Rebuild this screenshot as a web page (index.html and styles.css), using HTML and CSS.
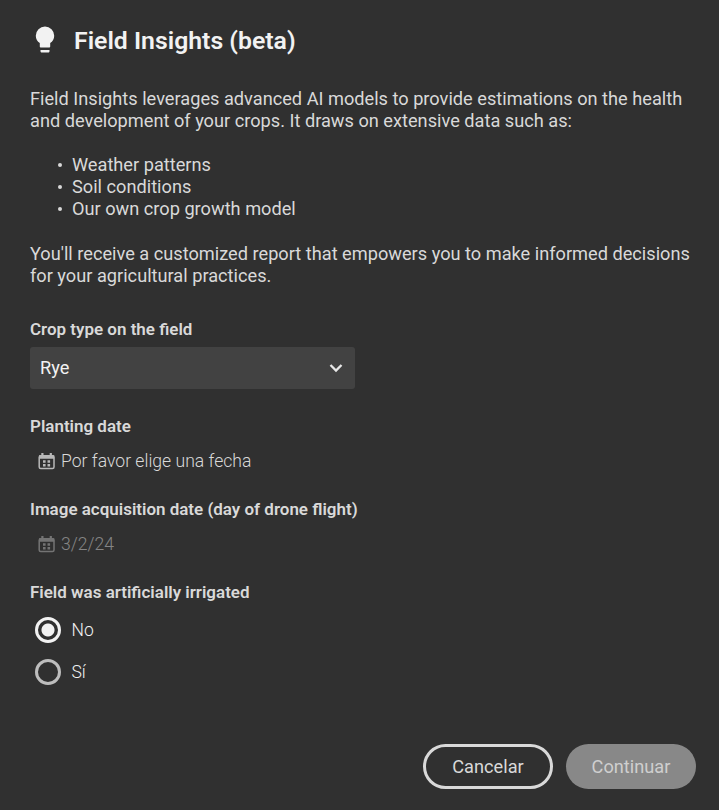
FILE: index.html
```html
<!DOCTYPE html>
<html lang="es">
<head>
    <meta charset="UTF-8">
    <meta name="viewport" content="width=device-width, initial-scale=1.0">
    <title>Field Insights (beta)</title>
    <link rel="stylesheet" href="styles.css">
</head>
<body>
    <div class="dialog">
        <div class="header">
            <svg class="bulb" width="20" height="28" viewBox="0 0 20 28">
                <path d="M10 .5a9.200 9.200 0 0 0-9.200 9.200c0 3.200 1.500 5.600 4 7.300v3.400c0 .6.500 1.100 1.100 1.100h8.200c.6 0 1.100-.5 1.100-1.100V17c2.500-1.700 4-4.100 4-7.300A9.200 9.200 0 0 0 10 .5zM5.500 24h9v1.200c0 .8-.6 1.300-1.300 1.300H6.800c-.7 0-1.300-.5-1.300-1.300z"/>
            </svg>
            <h1>Field Insights (beta)</h1>
        </div>
        <div class="intro">
            <p>Field Insights leverages advanced AI models to provide estimations on the health and development of your crops. It draws on extensive data such as:</p>
            <ul>
                <li>Weather patterns</li>
                <li>Soil conditions</li>
                <li>Our own crop growth model</li>
            </ul>
            <p>You'll receive a customized report that empowers you to make informed decisions for your agricultural practices.</p>
        </div>
        <div class="form">
            <div class="label">Crop type on the field</div>
            <div class="select">
                <span>Rye</span>
                <svg width="14" height="10" viewBox="0 0 14 10">
                    <path d="M1.500 2l5.500 5.500L12.500 2"/>
                </svg>
            </div>
            <div class="label">Planting date</div>
            <div class="date">
                <svg width="18" height="18" viewBox="0 0 18 18">
                    <rect class="frame" x="2.200" y="3.700" width="14.800" height="12.700" rx="1.500"/>
                    <path d="M2 3.200h15.200v3.500H2zM4.300.9h2.200v3H4.300zM12.700.9h2.200v3h-2.200zM6 8.300h2.600v2.500H6zM10.500 8.300h2.600v2.500h-2.600zM6 12h2.600v2.500H6zM10.500 12h2.600v2.500h-2.600z"/>
                </svg>
                <span>Por favor elige una fecha</span>
            </div>
            <div class="label">Image acquisition date (day of drone flight)</div>
            <div class="date disabled">
                <svg width="18" height="18" viewBox="0 0 18 18">
                    <rect class="frame" x="2.200" y="3.700" width="14.800" height="12.700" rx="1.500"/>
                    <path d="M2 3.200h15.200v3.500H2zM4.300.9h2.200v3H4.300zM12.700.9h2.200v3h-2.200zM6 8.300h2.600v2.500H6zM10.500 8.300h2.600v2.500h-2.600zM6 12h2.600v2.500H6zM10.500 12h2.600v2.500h-2.600z"/>
                </svg>
                <span>3/2/24</span>
            </div>
            <div class="label">Field was artificially irrigated</div>
            <label class="option">
                <input type="radio" name="irrigated" checked>
                <span>No</span>
            </label>
            <label class="option">
                <input type="radio" name="irrigated">
                <span>Sí</span>
            </label>
        </div>
        <div class="buttons">
            <button class="cancel">Cancelar</button>
            <button class="continue" disabled>Continuar</button>
        </div>
    </div>
</body>
</html>
```
FILE: styles.css
```css
body {
    margin: 0;
    background-color: #303030;
    color: #d9d9d9;
    font-family: Roboto, sans-serif;
    font-size: 18.2px;
    line-height: 22px;
}
.dialog {
    display: flex;
    flex-direction: column;
    height: 810px;
    padding: 24px 23px 21px 30px;
    box-sizing: border-box;
}
.header {
    display: flex;
    align-items: center;
    height: 32px;
}
.bulb {
    margin: 0 19px 0 5px;
    fill: #f2f2f2;
}
h1 {
    margin: 1px 0 0;
    color: #f2f2f2;
    font-size: 24.8px;
    font-weight: 600;
    line-height: 32px;
}
.intro {
    margin-top: 32px;
}
.intro p {
    margin: 0;
}
.intro ul {
    margin: 22px 0 23px;
    padding: 0;
    list-style: none;
}
.intro li {
    display: flex;
    align-items: center;
    padding-left: 28px;
}
.intro li::before {
    content: "";
    width: 4px;
    height: 4px;
    margin-right: 10px;
    border-radius: 50%;
    background-color: #d9d9d9;
}
.form {
    margin-top: 31px;
}
.label {
    font-size: 16.98px;
    font-weight: 600;
}
.select {
    display: flex;
    align-items: center;
    justify-content: space-between;
    width: 325px;
    height: 42px;
    margin: 7px 0 26px;
    padding: 0 12px 0 10px;
    box-sizing: border-box;
    border-radius: 3px;
    background-color: #424242;
    color: #f2f2f2;
}
.select svg {
    fill: none;
    stroke: #e8e8e8;
    stroke-width: 2.3;
}
.date {
    display: flex;
    align-items: center;
    gap: 6px;
    height: 22px;
    margin: 13px 0 26px;
    padding-left: 7px;
    font-size: 17.6px;
    font-weight: 300;
}
.date svg {
    fill: #b8b8b8;
}
.date .frame {
    fill: none;
    stroke: #b8b8b8;
    stroke-width: 1.5;
}
.date.disabled {
    opacity: 0.5;
}
.option {
    display: flex;
    align-items: center;
    height: 26px;
    margin: 14px 0 16px 5px;
    color: #f2f2f2;
    font-size: 17.5px;
    font-weight: 300;
}
.option input {
    appearance: none;
    width: 26px;
    height: 26px;
    margin: 0 10.5px 0 0;
    border: 3px solid #bdbdbd;
    border-radius: 50%;
}
.option input:checked {
    border-color: #f2f2f2;
    background: radial-gradient(circle, #f2f2f2 6px, transparent 7px);
}
.buttons {
    display: flex;
    justify-content: flex-end;
    gap: 13px;
    margin-top: auto;
}
.buttons button {
    width: 130px;
    height: 45px;
    padding: 0;
    border: none;
    border-radius: 23px;
    font-family: inherit;
    font-size: 18.2px;
}
.buttons .cancel {
    border: 3px solid #d9d9d9;
    background-color: transparent;
    color: #d9d9d9;
}
.buttons .continue {
    background-color: #888;
    color: #cfcfcf;
}
```
